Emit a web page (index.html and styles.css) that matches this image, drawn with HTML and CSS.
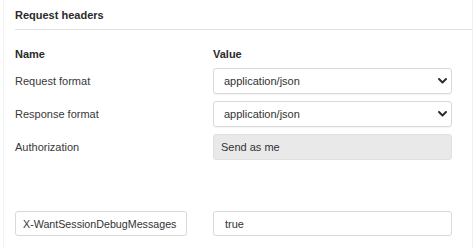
FILE: index.html
```html
<!DOCTYPE html>
<html>
<head>
<meta charset="utf-8">
<link rel="stylesheet" href="styles.css">
</head>
<body>
<div class="panel">
  <div class="header">Request headers</div>
  <div class="grid">
    <div class="col-head">Name</div>
    <div class="col-head">Value</div>

    <div class="label">Request format</div>
    <div class="box select"><span>application/json</span>
      <svg class="chev" width="9" height="6" viewBox="0 0 9 6"><path d="M1 1 L4.5 4.5 L8 1" fill="none" stroke="#2b2b2b" stroke-width="1.9" stroke-linecap="round" stroke-linejoin="round"/></svg>
    </div>

    <div class="label">Response format</div>
    <div class="box select"><span>application/json</span>
      <svg class="chev" width="9" height="6" viewBox="0 0 9 6"><path d="M1 1 L4.5 4.5 L8 1" fill="none" stroke="#2b2b2b" stroke-width="1.9" stroke-linecap="round" stroke-linejoin="round"/></svg>
    </div>

    <div class="label">Authorization</div>
    <div class="box disabled"><span>Send as me</span></div>
  </div>
  <div class="custom">
    <div class="box input name-input">X-WantSessionDebugMessages</div>
    <div class="box input value-input">true</div>
  </div>
</div>
</body>
</html>
```
FILE: styles.css
```css
html, body {
  margin: 0;
  padding: 0;
  background: #ffffff;
}
body {
  font-family: "Liberation Sans", Arial, Helvetica, sans-serif;
  font-size: 11px;
  color: #383838;
}
.panel {
  width: 470px;
  height: 248px;
  box-sizing: border-box;
  margin-left: 3px;
  padding-left: 11px;
  border-left: 1px solid #f3f3f3;
  border-right: 1px solid #f0f0f0;
}
.header {
  height: 29px;
  border-bottom: 1px solid #e2e2e2;
  display: flex;
  align-items: center;
  font-weight: bold;
  color: #2a2a2a;
}
.grid {
  display: grid;
  grid-template-columns: 198px 239px;
  grid-template-rows: 15px 26px 26px 26px;
  row-gap: 7px;
  margin-top: 16px;
}
.col-head {
  font-weight: bold;
  color: #2a2a2a;
  display: flex;
  align-items: center;
}
.label {
  display: flex;
  align-items: center;
}
.box {
  box-sizing: border-box;
  border: 1px solid #d9d9d9;
  border-radius: 3px;
  display: flex;
  align-items: center;
  color: #333333;
}
.select {
  justify-content: space-between;
  padding: 0 4px 0 10px;
  box-shadow: 0 1px 1px rgba(0,0,0,0.04);
}
.chev {
  display: block;
}
.disabled {
  background: #e9e9ea;
  border-color: #e0e0e0;
  padding-left: 7px;
}
.custom {
  display: flex;
  margin-top: 51px;
}
.input {
  height: 25px;
}
.name-input {
  width: 172px;
  padding-left: 7px;
  margin-right: 26px;
  font-size: 10.7px;
}
.value-input {
  width: 239px;
  padding-left: 11px;
}
```
